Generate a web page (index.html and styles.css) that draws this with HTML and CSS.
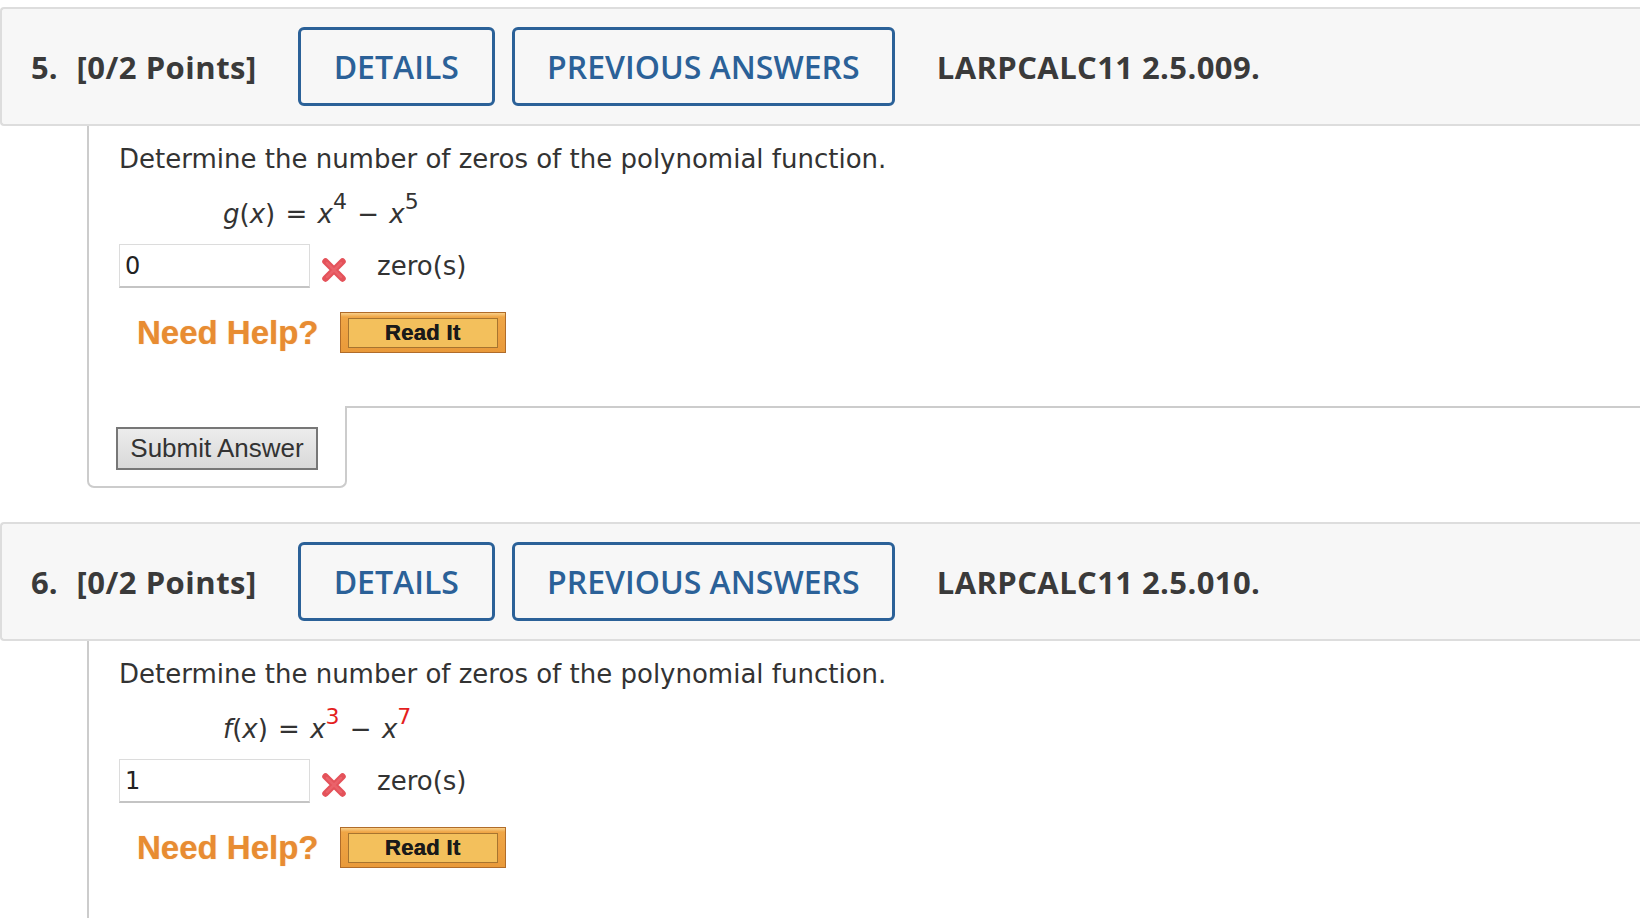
FILE: index.html
```html
<!DOCTYPE html>
<html lang="en">
<head>
<meta charset="utf-8">
<title>Questions</title>
<link rel="stylesheet" href="styles.css">
</head>
<body>
<div class="page">
  <section class="question">
    <header class="qhead">
      <span class="qnum">5.</span>
      <span class="qpts">[0/2 Points]</span>
      <button class="hbtn hbtn-details">DETAILS</button>
      <button class="hbtn hbtn-prev">PREVIOUS ANSWERS</button>
      <span class="qref">LARPCALC11 2.5.009.</span>
    </header>
    <div class="qbody">
      <div class="qcontent">
        <p class="prompt">Determine the number of zeros of the polynomial function.</p>
        <p class="formula"><i>g</i>(<i>x</i>) = <i>x</i><sup>4</sup> − <i>x</i><sup>5</sup></p>
        <div class="answer">
          <input class="ans-input" type="text" value="0">
          <svg class="wrong" viewBox="0 0 26 26" width="26" height="26" aria-hidden="true">
            <path d="M4.5 4.5 L21.5 21.5 M21.5 4.5 L4.5 21.5" stroke="#e4525a" stroke-width="6.5" stroke-linecap="round" fill="none"/>
            <path d="M6 6 L20 20 M20 6 L6 20" stroke="#ec6a70" stroke-width="2.5" stroke-linecap="round" fill="none" opacity="0.7"/>
          </svg>
          <span class="unit">zero(s)</span>
        </div>
        <div class="help">
          <span class="need-help">Need Help?</span>
          <button class="read-it"><span class="read-it-inner">Read It</span></button>
        </div>
      </div>
      <div class="qfoot">
        <div class="submit-tab"><button class="submit">Submit Answer</button></div>
        <div class="foot-rest"></div>
      </div>
    </div>
  </section>

  <section class="question question-next">
    <header class="qhead">
      <span class="qnum">6.</span>
      <span class="qpts">[0/2 Points]</span>
      <button class="hbtn hbtn-details">DETAILS</button>
      <button class="hbtn hbtn-prev">PREVIOUS ANSWERS</button>
      <span class="qref">LARPCALC11 2.5.010.</span>
    </header>
    <div class="qbody">
      <div class="qcontent">
        <p class="prompt">Determine the number of zeros of the polynomial function.</p>
        <p class="formula"><i>f</i>(<i>x</i>) = <i>x</i><sup class="red">3</sup> − <i>x</i><sup class="red">7</sup></p>
        <div class="answer">
          <input class="ans-input" type="text" value="1">
          <svg class="wrong" viewBox="0 0 26 26" width="26" height="26" aria-hidden="true">
            <path d="M4.5 4.5 L21.5 21.5 M21.5 4.5 L4.5 21.5" stroke="#e4525a" stroke-width="6.5" stroke-linecap="round" fill="none"/>
            <path d="M6 6 L20 20 M20 6 L6 20" stroke="#ec6a70" stroke-width="2.5" stroke-linecap="round" fill="none" opacity="0.7"/>
          </svg>
          <span class="unit">zero(s)</span>
        </div>
        <div class="help">
          <span class="need-help">Need Help?</span>
          <button class="read-it"><span class="read-it-inner">Read It</span></button>
        </div>
      </div>
    </div>
  </section>
</div>
</body>
</html>
```

FILE: styles.css
```css
html, body {
  margin: 0;
  padding: 0;
  background: #ffffff;
  overflow: hidden;
}

.page {
  padding-top: 7px;
}

.question-next {
  margin-top: 34px;
}

/* ---------- header ---------- */
.qhead {
  display: flex;
  align-items: center;
  height: 115px;
  padding-left: 29px;
  background: #f7f7f7;
  border: 2px solid #dddddd;
  border-right: none;
  border-radius: 4px 0 0 4px;
  font-family: "Open Sans", "Liberation Sans", sans-serif;
  color: #3a3a3a;
}

.qnum {
  font-size: 31px;
  font-weight: 700;
}

.qpts {
  margin-left: 19px;
  font-size: 31px;
  font-weight: 700;
  letter-spacing: 0.5px;
}

.hbtn {
  box-sizing: border-box;
  height: 79px;
  padding: 0;
  background: transparent;
  border: 3px solid #2b6198;
  border-radius: 6px;
  color: #2b6198;
  font-family: "Open Sans", "Liberation Sans", sans-serif;
  font-size: 32px;
  font-weight: 600;
  text-align: center;
  cursor: pointer;
}

.hbtn-details {
  width: 197px;
  margin-left: 41px;
}

.hbtn-prev {
  width: 383px;
  margin-left: 17px;
}

.qref {
  margin-left: 42px;
  font-size: 31px;
  font-weight: 700;
  letter-spacing: 0.4px;
}

/* ---------- body ---------- */
.qbody {
  margin-left: 87px;
  font-family: "DejaVu Sans", Verdana, sans-serif;
  color: #333333;
}

.qcontent {
  border-left: 2px solid #cccccc;
  padding: 16px 0 53px 30px;
}

.prompt {
  margin: 0;
  font-size: 26px;
  line-height: 34px;
}

.formula {
  margin: 21px 0 0 104px;
  font-size: 26px;
  line-height: 34px;
  word-spacing: 2px;
}

.formula i {
  font-style: italic;
}

.formula sup {
  font-size: 22px;
  line-height: 0;
  vertical-align: 0.62em;
}

.formula sup.red {
  color: #e41e1e;
}

.answer {
  display: flex;
  align-items: center;
  margin-top: 13px;
}

.ans-input {
  box-sizing: border-box;
  width: 191px;
  height: 44px;
  margin: 0;
  padding: 0 0 0 5px;
  border: 1px solid #dcdcdc;
  border-bottom: 2px solid #c4c4c4;
  background: #ffffff;
  font-family: "DejaVu Sans", Verdana, sans-serif;
  font-size: 24px;
  color: #222222;
  outline: none;
}

.wrong {
  margin-left: 11px;
  margin-top: 8px;
  flex: none;
}

.unit {
  margin-left: 30px;
  font-size: 26px;
  line-height: 34px;
}

.help {
  display: flex;
  align-items: center;
  margin-top: 24px;
}

.need-help {
  margin-left: 18px;
  font-family: "Liberation Sans", Arial, sans-serif;
  font-weight: 700;
  font-size: 33px;
  color: #e88c32;
  text-shadow: 0 0 1px rgba(232, 140, 50, 0.6);
}

.read-it {
  box-sizing: border-box;
  width: 166px;
  height: 41px;
  margin-left: 21px;
  padding: 5px 7px 4px 7px;
  border: 1px solid #b06c2a;
  background: linear-gradient(#f9d08a 0px, #efa646 4px, #e99a3a 100%);
  cursor: pointer;
}

.read-it-inner {
  display: flex;
  align-items: center;
  justify-content: center;
  box-sizing: border-box;
  height: 100%;
  border: 1px solid #a7742f;
  background: #f3c05c;
  font-family: "Liberation Sans", Arial, sans-serif;
  font-weight: 700;
  font-size: 22px;
  color: #1a1a1a;
  text-shadow: 0.5px 0 0 #1a1a1a;
  letter-spacing: 0.3px;
}

/* ---------- footer / submit ---------- */
.qfoot {
  display: flex;
  align-items: flex-start;
}

.submit-tab {
  box-sizing: border-box;
  width: 260px;
  padding: 21px 0 16px 27px;
  border: 2px solid #cccccc;
  border-top: none;
  border-radius: 0 0 7px 7px;
}

.submit {
  box-sizing: border-box;
  width: 202px;
  height: 43px;
  padding: 0;
  border: 2px solid #777777;
  background: linear-gradient(#ececec, #d9d9d9);
  font-family: "Liberation Sans", Arial, sans-serif;
  font-size: 26px;
  color: #333333;
  cursor: pointer;
}

.foot-rest {
  flex: 1;
  border-top: 2px solid #cccccc;
}
```
